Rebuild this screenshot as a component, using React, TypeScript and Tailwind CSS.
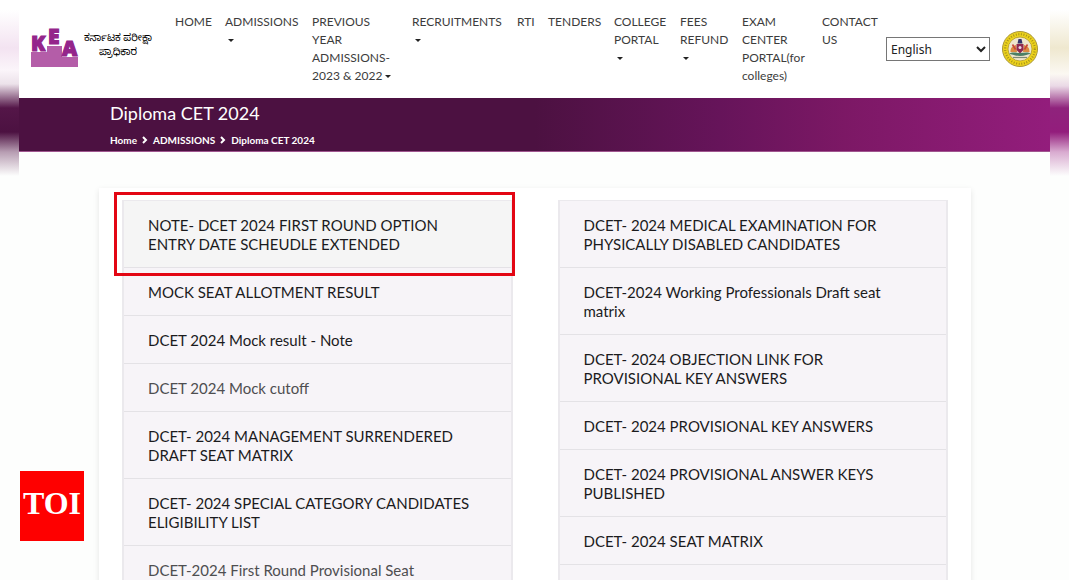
type NavItem = { lines: string[]; width: string; caret?: "inline" | "below" };

const NAV_ITEMS: NavItem[] = [
  { lines: ["HOME"], width: "w-[38px]" },
  { lines: ["ADMISSIONS"], width: "w-[75px]", caret: "below" },
  {
    lines: ["PREVIOUS", "YEAR", "ADMISSIONS-", "2023 & 2022"],
    width: "w-[88px]",
    caret: "inline",
  },
  { lines: ["RECRUITMENTS"], width: "w-[93px]", caret: "below" },
  { lines: ["RTI"], width: "w-[19px]" },
  { lines: ["TENDERS"], width: "w-[54px]" },
  { lines: ["COLLEGE", "PORTAL"], width: "w-[54px]", caret: "below" },
  { lines: ["FEES", "REFUND"], width: "w-[50px]", caret: "below" },
  { lines: ["EXAM", "CENTER", "PORTAL(for", "colleges)"], width: "w-[68px]" },
  { lines: ["CONTACT", "US"], width: "w-[58px]" },
];

type Notice = { text: string; highlighted?: boolean; muted?: boolean };

const LEFT_NOTICES: Notice[] = [
  { text: "NOTE- DCET 2024 FIRST ROUND OPTION ENTRY DATE SCHEUDLE EXTENDED", highlighted: true },
  { text: "MOCK SEAT ALLOTMENT RESULT" },
  { text: "DCET 2024 Mock result - Note" },
  { text: "DCET 2024 Mock cutoff", muted: true },
  { text: "DCET- 2024 MANAGEMENT SURRENDERED DRAFT SEAT MATRIX" },
  { text: "DCET- 2024 SPECIAL CATEGORY CANDIDATES ELIGIBILITY LIST" },
  { text: "DCET-2024 First Round Provisional Seat", muted: true },
];

const RIGHT_NOTICES: Notice[] = [
  { text: "DCET- 2024 MEDICAL EXAMINATION FOR PHYSICALLY DISABLED CANDIDATES" },
  { text: "DCET-2024 Working Professionals Draft seat matrix" },
  { text: "DCET- 2024 OBJECTION LINK FOR PROVISIONAL KEY ANSWERS" },
  { text: "DCET- 2024 PROVISIONAL KEY ANSWERS" },
  { text: "DCET- 2024 PROVISIONAL ANSWER KEYS PUBLISHED" },
  { text: "DCET- 2024 SEAT MATRIX" },
];

const Caret = () => (
  <svg className="ml-[3px] inline-block h-[3px] w-[6px] align-middle" viewBox="0 0 6 3">
    <path d="M0 0h6L3 3z" fill="#222" />
  </svg>
);

const Chevron = () => (
  <svg width="6" height="8" viewBox="0 0 6 8" fill="none" stroke="currentColor" strokeWidth="2">
    <path d="M1 1l3 3-3 3" />
  </svg>
);

const KeaLogo = () => (
  <a href="#home" className="mt-[28px] flex shrink-0 gap-1 text-black">
    <svg width="47" height="39" viewBox="0 0 47 39" overflow="visible" aria-label="KEA">
      <path d="M0 24h16v-6h15v11h16v10H0z" fill="#b45da8" />
      <g
        fill="#94258b"
        stroke="#94258b"
        strokeWidth="1.2"
        fontFamily="Open Sans, sans-serif"
        fontWeight="800"
      >
        <text x="0" y="23" fontSize="21">K</text>
        <text x="17" y="16" fontSize="21">E</text>
        <text x="31" y="28" fontSize="21">A</text>
      </g>
    </svg>
    <span
      lang="kn"
      className="mt-[2px] w-[72px] text-center font-['Noto_Sans','Noto_Sans_Kannada',sans-serif] text-[10px] leading-[14px] whitespace-nowrap"
    >
      ಕರ್ನಾಟಕ ಪರೀಕ್ಷಾ
      <br />
      ಪ್ರಾಧಿಕಾರ
    </span>
  </a>
);

const Emblem = () => (
  <svg className="mt-[31px] shrink-0" width="36" height="36" viewBox="0 0 36 36" aria-label="Government of Karnataka">
    <circle cx="18" cy="18" r="17.5" fill="#ecd21c" stroke="#a8953a" />
    <circle
      cx="18"
      cy="18"
      r="14.8"
      fill="none"
      stroke="#8a7818"
      strokeWidth="2.2"
      strokeDasharray="1 1.6"
      strokeOpacity="0.7"
    />
    <circle cx="18" cy="18" r="12" fill="#efe6cd" stroke="#b39a20" strokeWidth="0.8" />
    <path d="M16.5 8h3l1 4.5h-5z" fill="#34336b" />
    <path d="M8.5 21c0-4 1.5-6 5.5-7l1 7zM27.5 21c0-4-1.5-6-5.5-7l-1 7z" fill="#dc8a3f" />
    <path d="M10.5 13.5l3 5M25.5 13.5l-3 5" stroke="#c8443a" strokeWidth="1.6" />
    <path d="M14.5 13h7v6L18 22.5 14.5 19z" fill="#8f2a52" />
    <circle cx="18" cy="16.5" r="1.5" fill="#e9d9e6" />
    <path d="M7 23c3-2.5 7-1 11-1s8-1.5 11 1c-3 0-6 2-11 2s-8-2-11-2z" fill="#4c7f65" />
    <path d="M11 26.5h14" stroke="#7f8a78" strokeWidth="1.2" />
  </svg>
);

const Header = () => (
  <header className="flex min-h-[98px] items-start bg-white pr-3 pl-3">
    <KeaLogo />
    <nav className="mt-[13px] ml-[21px] flex gap-3">
      {NAV_ITEMS.map(({ lines, width, caret }) => (
        <a
          key={lines[0]}
          href="#menu"
          className={`${width} shrink-0 text-[12px] leading-[18px] whitespace-nowrap text-[#3c3c3c]`}
        >
          {lines.map((line, i) => (
            <span key={line} className="block">
              {line}
              {caret === "inline" && i === lines.length - 1 && <Caret />}
            </span>
          ))}
          {caret === "below" && (
            <span className="block">
              <Caret />
            </span>
          )}
        </a>
      ))}
    </nav>
    <select
      aria-label="Language"
      defaultValue="English"
      className="mt-[37px] ml-auto h-6 w-[104px] shrink-0 border border-[#767676] bg-white font-['Noto_Sans',sans-serif] text-[12px] text-[#222]"
    >
      <option>English</option>
      <option>ಕನ್ನಡ</option>
    </select>
    <div className="ml-3 flex">
      <Emblem />
    </div>
  </header>
);

const TitleBar = () => (
  <section className="border-b border-[#a0568f] bg-[linear-gradient(90deg,#4c1141_0%,#4c1141_50%,#66145a_68%,#7c1865_80%,#931d7c_100%)] pt-1 pb-[4px] pl-[91px] text-white">
    <h1 className="text-[18px] leading-[22px]">Diploma CET 2024</h1>
    <div className="mt-[9px] flex items-center gap-[5px] text-[10px] leading-[14px] font-bold">
      <a href="#home">Home</a>
      <Chevron />
      <a href="#admissions">ADMISSIONS</a>
      <Chevron />
      <span>Diploma CET 2024</span>
    </div>
  </section>
);

const NoticeList = ({ notices }: { notices: Notice[] }) => (
  <ul className="flex-1 border-x-2 border-t border-[#ebe9ed] bg-[#f7f4f8]">
    {notices.map(({ text, highlighted, muted }) => (
      <li key={text} className="relative border-b border-[#e4e2e6]">
        <button
          type="button"
          className={`block w-full px-6 pt-[15px] pb-[13px] text-left text-[15px] leading-[19px] ${
            muted ? "text-[#4e4e50]" : "text-[#1b1b1d]"
          } ${highlighted ? "bg-[#f5f5f5]" : ""}`}
        >
          {text}
        </button>
        {highlighted && (
          <div className="pointer-events-none absolute -top-[9px] -right-1 -bottom-[9px] -left-[10px] z-10 border-[3px] border-[#e30613]" />
        )}
      </li>
    ))}
  </ul>
);

const App = () => (
  <div className="flex h-screen overflow-hidden bg-[#fdfefd] font-['Lato',sans-serif]">
    <div className="w-[19px] shrink-0 bg-[linear-gradient(180deg,#fff_10px,#f3e3f1_48px,#fbf5fa_70px,#ece2ea_84px,#541648_108px,#4c1141_132px,#b79db2_152px,#fdfefd_176px)]" />
    <main className="min-w-0 flex-1">
      <Header />
      <TitleBar />
      <div className="mt-[36px] mr-[79px] ml-[80px] flex gap-[45px] bg-white px-[23px] pt-3 shadow-[0_2px_6px_rgba(0,0,0,0.1)]">
        <NoticeList notices={LEFT_NOTICES} />
        <NoticeList notices={RIGHT_NOTICES} />
      </div>
    </main>
    <div className="w-[19px] shrink-0 bg-[linear-gradient(180deg,#fff_10px,#efe8cf_48px,#fbf8f2_74px,#ead9e6_86px,#8f237c_108px,#931d7c_132px,#d9abd0_152px,#fdfefd_176px)]" />
    <a
      href="#toi"
      className="fixed bottom-[39px] left-5 z-20 h-[70px] w-16 bg-[#fe0000] text-center font-['Liberation_Serif',serif] text-[32px] leading-[64px] font-bold text-white"
    >
      TOI
    </a>
  </div>
);

export default App;
